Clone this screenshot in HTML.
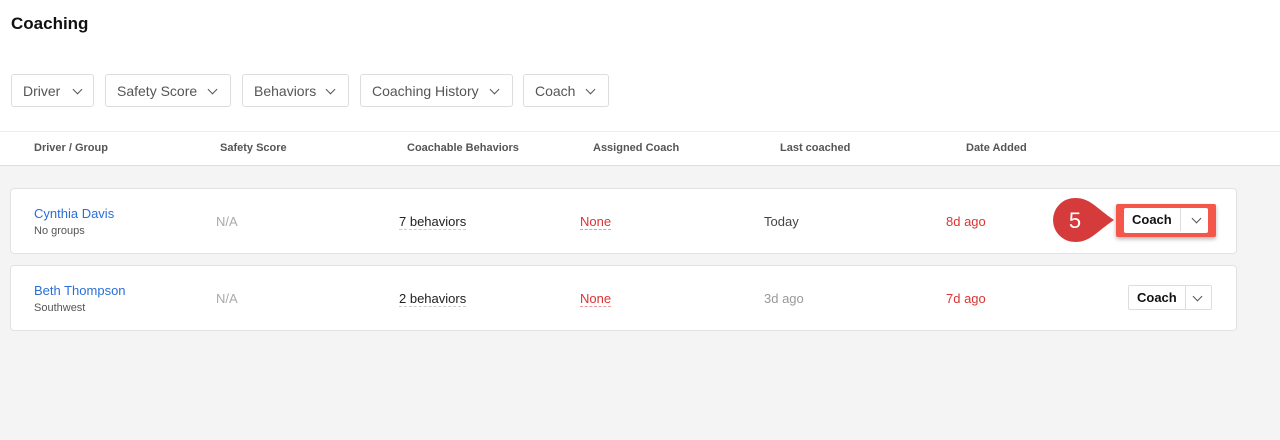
<!DOCTYPE html><html><head><style>
body{margin:0;width:1280px;height:440px;background:#f4f4f4;font-family:"Liberation Sans",sans-serif;position:relative;overflow:hidden}
.top{position:absolute;left:0;top:0;width:1280px;height:165px;background:#fff;border-bottom:1px solid #ddd}
h1{position:absolute;left:11px;top:14px;margin:0;font-size:17px;font-weight:bold;color:#111}
.f{position:absolute;top:74px;height:33px;border:1px solid #ddd;border-radius:3px;box-sizing:border-box;font-size:14px;color:#555;line-height:32px;padding-left:11px}
.chev{position:absolute;width:6px;height:6px;border-right:1.3px solid #555;border-bottom:1.3px solid #555;transform:rotate(45deg)}
.hr{position:absolute;top:131px;left:0;width:1280px;border-top:1px solid #eee}
.th{position:absolute;top:142px;font-size:11px;color:#555;font-weight:bold}
.card{position:absolute;left:10px;width:1227px;height:66px;background:#fff;border:1px solid #e2e2e2;border-radius:4px;box-sizing:border-box}
.t{position:absolute;font-size:13px}
.btn{position:absolute;width:84px;height:25px;border:1px solid #ddd;background:#fff;box-sizing:border-box;border-radius:2px}
.btn span{position:absolute;left:8px;top:4px;font-size:13px;font-weight:bold;color:#111}
.btn i{position:absolute;left:56px;top:0;height:23px;border-left:1px solid #ddd}
</style></head><body>
<div class="top"></div>
<h1>Coaching</h1>
<div class="f" style="left:11px;width:83px">Driver<div class="chev" style="left:62px;top:11px"></div></div>
<div class="f" style="left:105px;width:126px">Safety Score<div class="chev" style="left:103px;top:11px"></div></div>
<div class="f" style="left:242px;width:107px">Behaviors<div class="chev" style="left:84px;top:11px"></div></div>
<div class="f" style="left:360px;width:153px">Coaching History<div class="chev" style="left:130px;top:11px"></div></div>
<div class="f" style="left:523px;width:86px">Coach<div class="chev" style="left:63px;top:11px"></div></div>
<div class="hr"></div>
<div class="th" style="left:34px">Driver / Group</div>
<div class="th" style="left:220px">Safety Score</div>
<div class="th" style="left:407px">Coachable Behaviors</div>
<div class="th" style="left:593px">Assigned Coach</div>
<div class="th" style="left:780px">Last coached</div>
<div class="th" style="left:966px">Date Added</div>

<div class="card" style="top:188px"></div>
<div class="t" style="left:34px;top:206px;color:#2a6fd6">Cynthia Davis</div>
<div class="t" style="left:34px;top:225px;font-size:11px;color:#555">No groups</div>
<div class="t" style="left:216px;top:214px;color:#aaa">N/A</div>
<div class="t" style="left:399px;top:214px;color:#222;border-bottom:1px dashed #ccc">7 behaviors</div>
<div class="t" style="left:580px;top:214px;color:#d33;border-bottom:1px dashed #e99">None</div>
<div class="t" style="left:764px;top:214px;color:#444">Today</div>
<div class="t" style="left:946px;top:214px;color:#d33">8d ago</div>
<div style="position:absolute;left:1116px;top:204px;width:100px;height:33px;background:#f4564a;border-radius:2px;box-shadow:0 2px 4px rgba(0,0,0,.3)"></div>
<div class="btn" style="left:1124px;top:208px;border:none"><span>Coach</span><i></i><div class="chev" style="left:69px;top:7px"></div></div>
<svg style="position:absolute;left:1050px;top:198px" width="70" height="46"><path d="M25 0 C40 0 45 9 64 22 C45 35 40 44 25 44 A22 22 0 0 1 25 0Z" fill="#d63b3b"/><text x="25" y="30" font-size="22" fill="#fff" text-anchor="middle" font-family="Liberation Sans">5</text></svg>

<div class="card" style="top:265px"></div>
<div class="t" style="left:34px;top:283px;color:#2a6fd6">Beth Thompson</div>
<div class="t" style="left:34px;top:302px;font-size:11px;color:#555">Southwest</div>
<div class="t" style="left:216px;top:291px;color:#aaa">N/A</div>
<div class="t" style="left:399px;top:291px;color:#222;border-bottom:1px dashed #ccc">2 behaviors</div>
<div class="t" style="left:580px;top:291px;color:#d33;border-bottom:1px dashed #e99">None</div>
<div class="t" style="left:764px;top:291px;color:#999">3d ago</div>
<div class="t" style="left:946px;top:291px;color:#d33">7d ago</div>
<div class="btn" style="left:1128px;top:285px"><span>Coach</span><i></i><div class="chev" style="left:65px;top:7px"></div></div>
</body></html>
